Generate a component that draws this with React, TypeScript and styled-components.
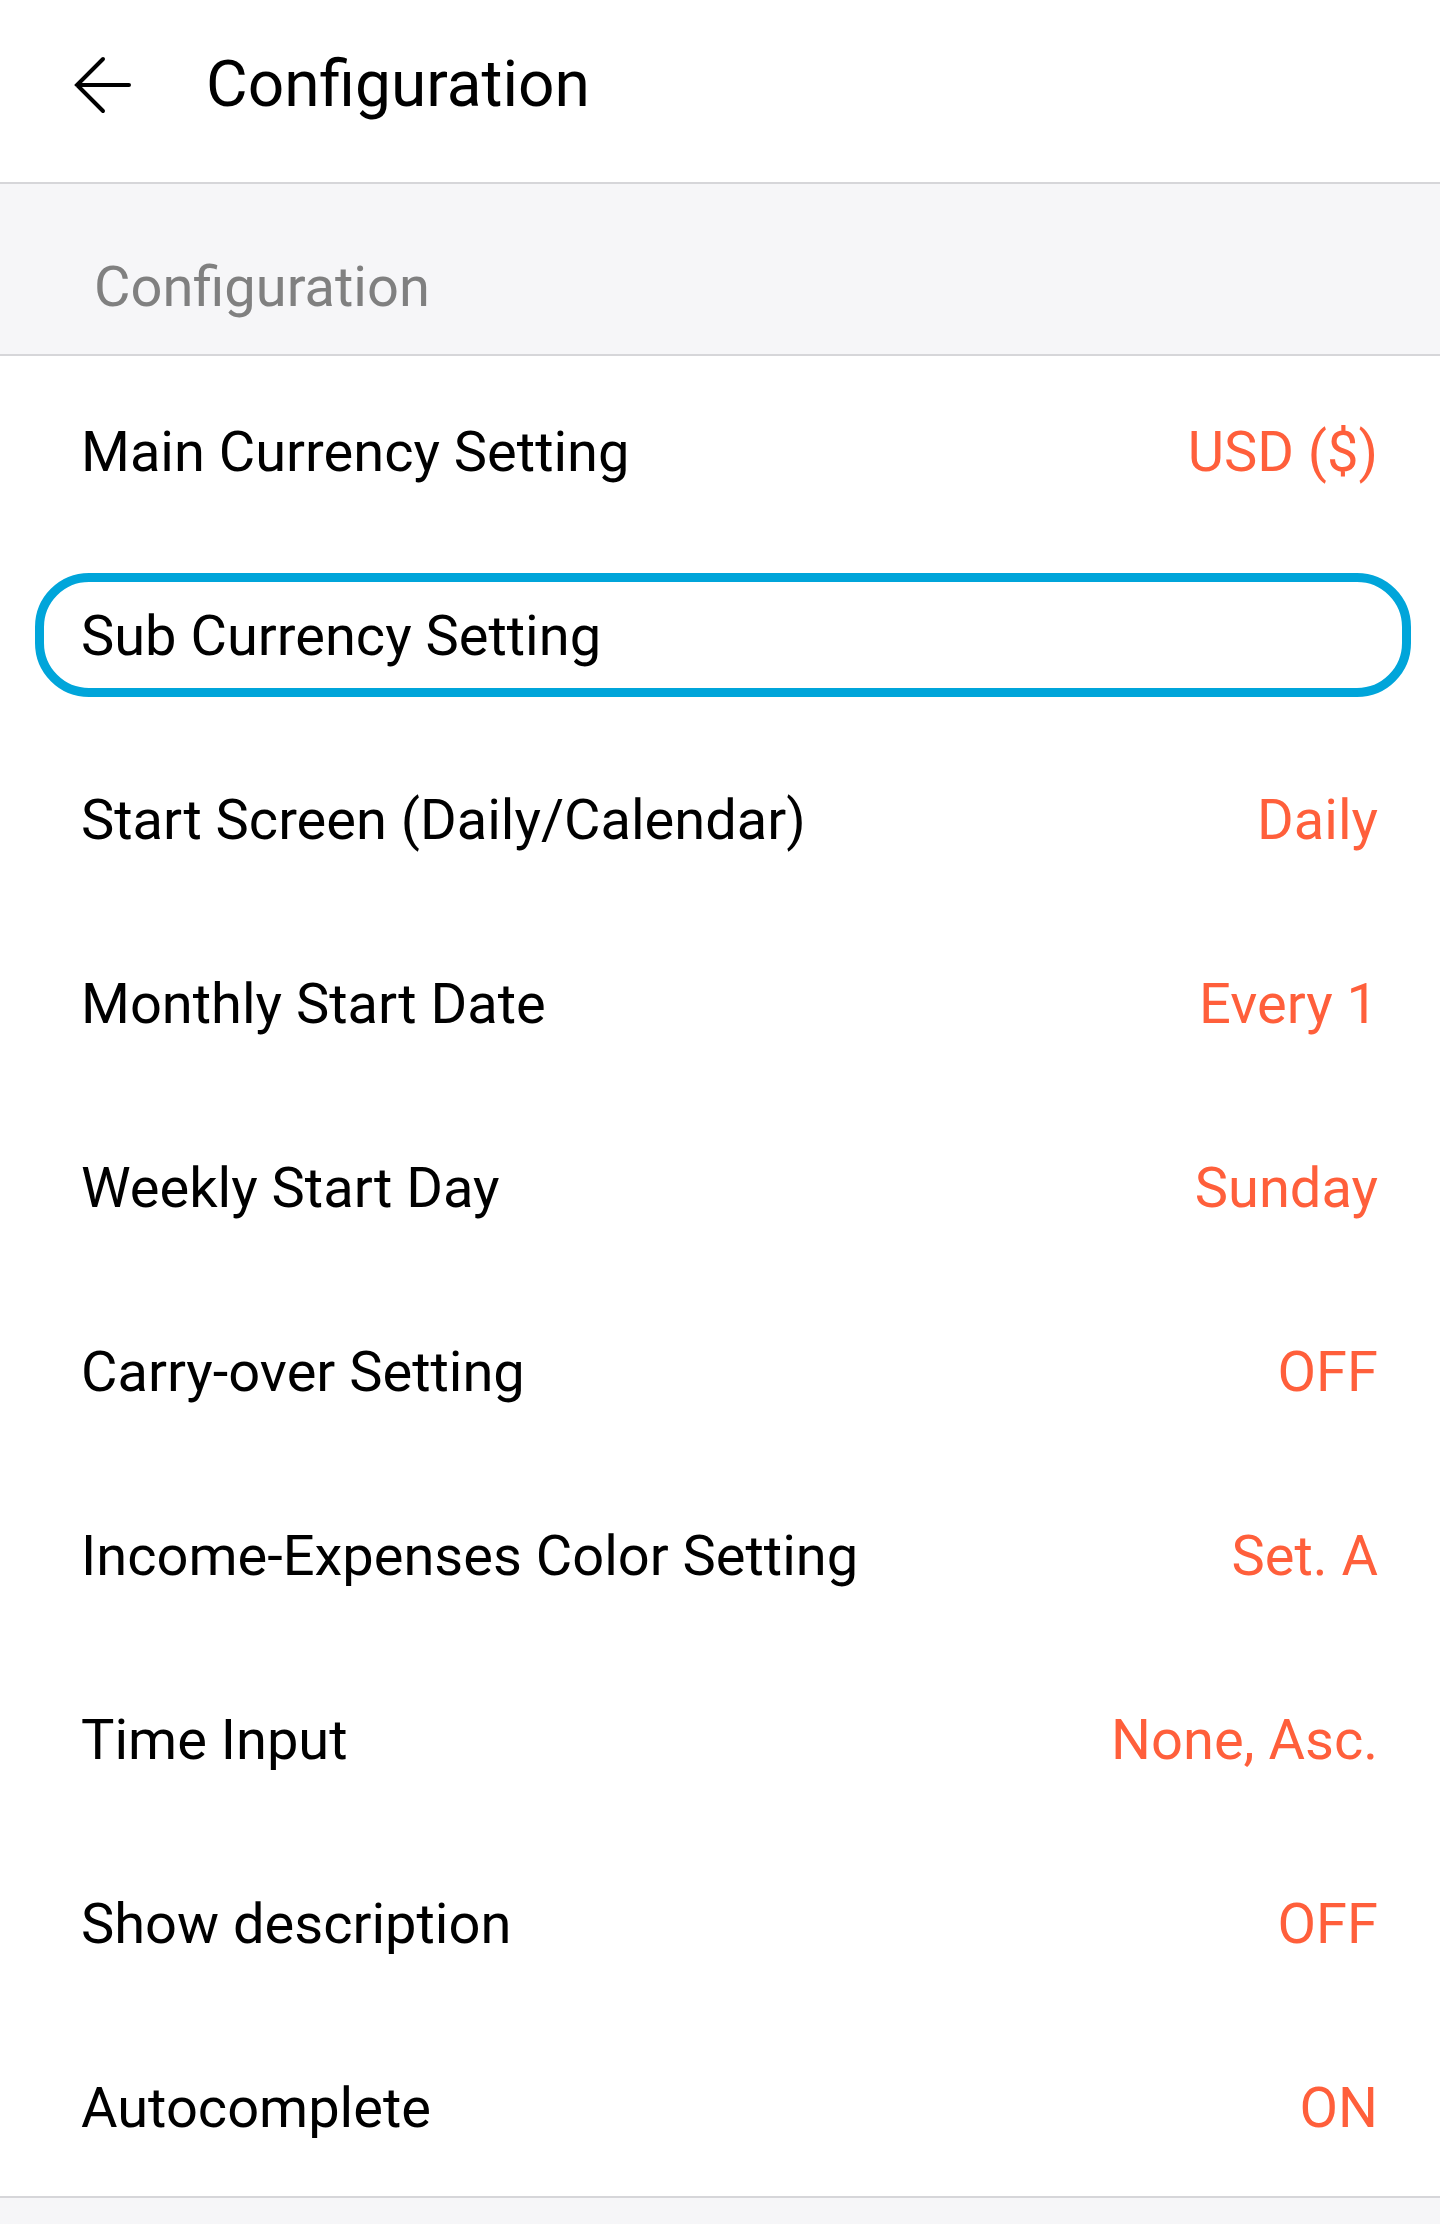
import React from "react";
import styled, { createGlobalStyle } from "styled-components";

const GlobalStyle = createGlobalStyle`
  html, body {
    margin: 0;
    padding: 0;
    background: #f6f6f8;
    font-family: Roboto, "Noto Sans", "Liberation Sans", sans-serif;
  }
  #root {
    min-height: 100vh;
    background: #f6f6f8;
  }
`;

const Page = styled.div`
  display: flex;
  flex-direction: column;
  width: 100%;
`;

const Header = styled.header`
  display: flex;
  align-items: center;
  height: 184px;
  padding-bottom: 12px;
  box-sizing: border-box;
  background: #ffffff;
  border-bottom: 2px solid #d6d6d9;
`;

const BackButton = styled.button`
  display: flex;
  align-items: center;
  justify-content: center;
  margin-left: 74px;
  width: 58px;
  height: 58px;
  padding: 0;
  border: none;
  background: transparent;
  cursor: pointer;
`;

const Title = styled.h1`
  margin: 0 0 0 74px;
  font-size: 64px;
  font-weight: 400;
  line-height: 1;
  color: #000000;
`;

const SectionHeader = styled.div`
  height: 172px;
  padding: 75px 0 0 94px;
  box-sizing: border-box;
  background: #f6f6f8;
  border-bottom: 2px solid #d6d6d9;
  font-size: 56px;
  line-height: 1;
  color: #808080;
`;

const List = styled.ul`
  list-style: none;
  margin: 0;
  padding: 0;
  background: #ffffff;
  border-bottom: 2px solid #d6d6d9;
`;

const Row = styled.li<{ $focused?: boolean }>`
  position: relative;
  display: flex;
  align-items: center;
  justify-content: space-between;
  height: 184px;
  padding: 8px 62px 0 81px;
  box-sizing: border-box;
  font-size: 56px;
  line-height: 1;

  ${(p) =>
    p.$focused &&
    `
    &::after {
      content: "";
      position: absolute;
      top: 33px;
      bottom: 27px;
      left: 35px;
      right: 29px;
      border: 9px solid #00a5da;
      border-radius: 54px;
      pointer-events: none;
    }
  `}
`;

const Label = styled.span`
  color: #000000;
`;

const Value = styled.span`
  color: #ff5f3b;
`;

const items: { label: string; value: string; focused?: boolean }[] = [
  { label: "Main Currency Setting", value: "USD ($)" },
  { label: "Sub Currency Setting", value: "", focused: true },
  { label: "Start Screen (Daily/Calendar)", value: "Daily" },
  { label: "Monthly Start Date", value: "Every 1" },
  { label: "Weekly Start Day", value: "Sunday" },
  { label: "Carry-over Setting", value: "OFF" },
  { label: "Income-Expenses Color Setting", value: "Set. A" },
  { label: "Time Input", value: "None, Asc." },
  { label: "Show description", value: "OFF" },
  { label: "Autocomplete", value: "ON" },
];

export default function App() {
  return (
    <>
      <GlobalStyle />
      <Page>
        <Header>
          <BackButton aria-label="Back">
            <svg width="58" height="58" viewBox="0 0 58 58" fill="none">
              <path
                d="M29 3 L3 29 L29 55 M3 29 L55 29"
                stroke="#000"
                strokeWidth="4"
                strokeLinecap="round"
                strokeLinejoin="miter"
              />
            </svg>
          </BackButton>
          <Title>Configuration</Title>
        </Header>
        <SectionHeader>Configuration</SectionHeader>
        <List>
          {items.map((it) => (
            <Row key={it.label} $focused={it.focused}>
              <Label>{it.label}</Label>
              {it.value && <Value>{it.value}</Value>}
            </Row>
          ))}
        </List>
      </Page>
    </>
  );
}
